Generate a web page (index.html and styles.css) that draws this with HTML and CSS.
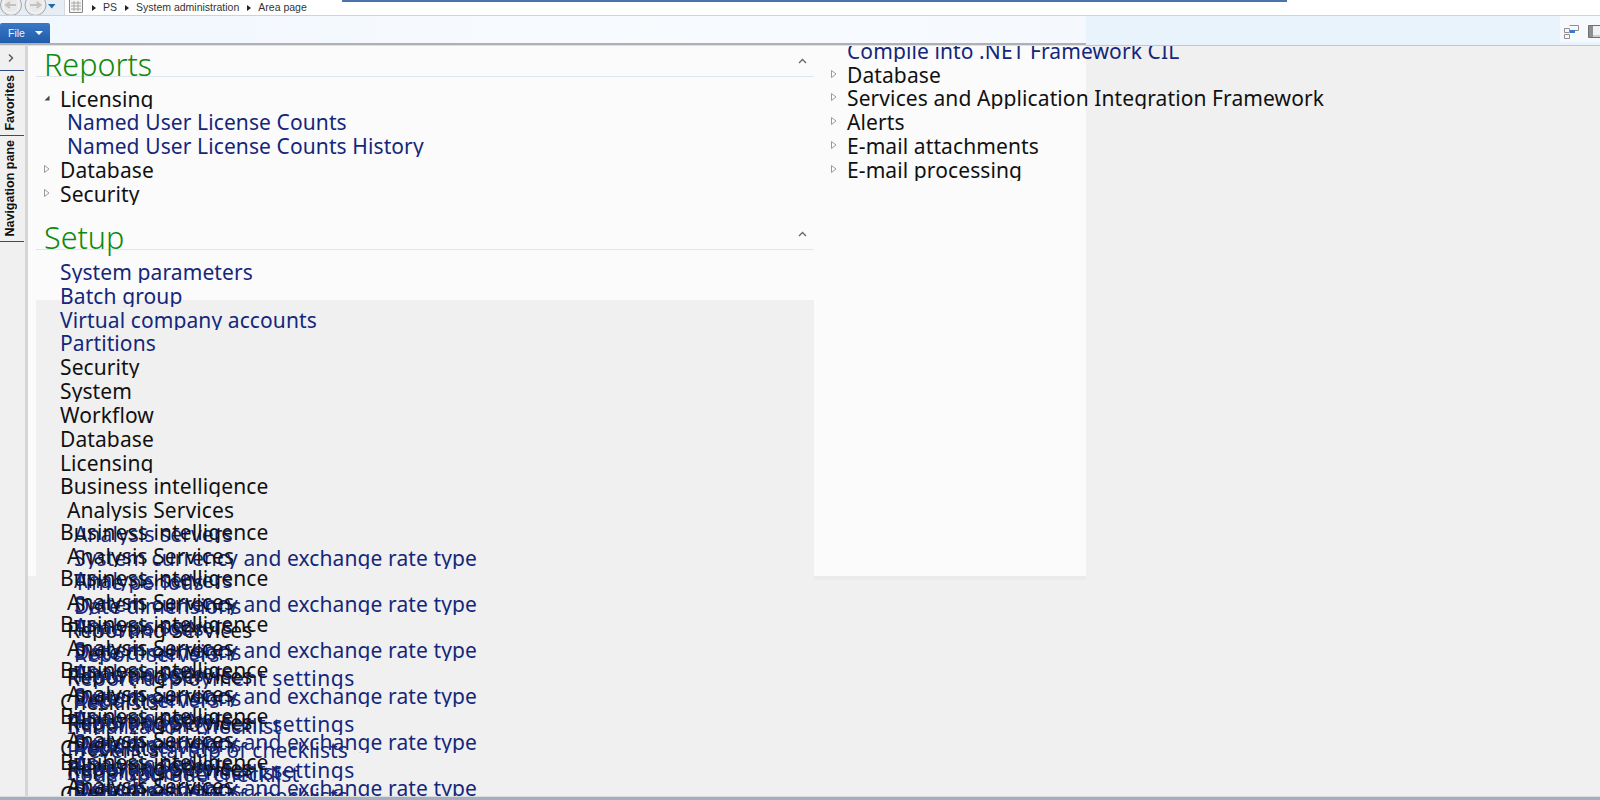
FILE: index.html
```html
<!DOCTYPE html>
<html lang="en">
<head>
<meta charset="utf-8">
<title>System administration - Area page</title>
<link rel="stylesheet" href="styles.css">
</head>
<body>
<div class="app">
  <header class="topbar">
    <div class="strip"></div>
    <div class="navbtns">
      <svg class="navsvg" width="64" height="16" viewBox="0 0 64 16">
        <circle cx="11" cy="5" r="10.500" fill="#e9e9e9" stroke="#a2a9b1"/>
        <circle cx="11" cy="5" r="8" fill="none" stroke="#f8f8f8"/>
        <path d="M16 5H7M10 2 6 5l4 3" fill="none" stroke="#c2c2c2" stroke-width="2"/>
        <circle cx="35.500" cy="5" r="10.500" fill="#e9e9e9" stroke="#a2a9b1"/>
        <circle cx="35.500" cy="5" r="8" fill="none" stroke="#f8f8f8"/>
        <path d="M30 5h9M36.500 2l4 3-4 3" fill="none" stroke="#c2c2c2" stroke-width="2"/>
        <path d="M48 4h7.500l-3.750 4.500z" fill="#1f6aa5"/>
      </svg>
    </div>
    <div class="address">
      <svg class="addricon" width="16" height="14" viewBox="0 0 16 14">
        <path d="M1.500 0v12.500h13V0" fill="#f4f4f4" stroke="#8a8a8a"/>
        <path d="M3 3h10M3 6h10M3 9h10M6 1v10M10 1v10" stroke="#a8a8a8" fill="none"/>
      </svg>
      <span class="crumbarrow"></span><span class="crumb">PS</span>
      <span class="crumbarrow"></span><span class="crumb">System administration</span>
      <span class="crumbarrow"></span><span class="crumb">Area page</span>
    </div>
  </header>

  <div class="ribbon">
    <div class="ribbon-left">
      <div class="filetab"><span>File</span><i class="filearrow"></i></div>
    </div>
    <div class="ribbon-right">
      <div class="winicons">
        <svg width="16" height="14" viewBox="0 0 16 14">
          <path d="M5.500 .5h9v5h-4M.5 3.500h5v4h-5zM.5 9.500h5v4h-5z" fill="none" stroke="#8f8f8f"/>
          <path d="M6 5h5v3H6z" fill="#3a78d0"/>
        </svg>
        <svg width="16" height="14" viewBox="0 0 16 14">
          <path d="M.5 .5H16v12H.5z" fill="#f2f2f2" stroke="#6f6f6f"/>
          <path d="M1 1h4v11H1z" fill="#8f8f8f"/>
          <path d="M5 10h11v2H5z" fill="#cfcfcf"/>
        </svg>
      </div>
    </div>
  </div>

  <div class="body">
    <nav class="rail">
      <div class="rail-toggle">
        <svg width="6" height="8" viewBox="0 0 6 8"><path d="M1 .5 4.500 4 1 7.500" fill="none" stroke="#555" stroke-width="1.400"/></svg>
      </div>
      <div class="railtab favorites"><span>Favorites</span></div>
      <div class="railtab navpane"><span>Navigation pane</span></div>
    </nav>

    <main class="sheet">
      <div class="col-left">
        <section class="reports">
          <div class="heading"><h2>Reports</h2><svg class="collapse" width="9" height="6" viewBox="0 0 9 6"><path d="M1 5l3.500-3.500L8 5" fill="none" stroke="#666" stroke-width="1.300"/></svg></div>
          <div class="rows">
            <div class="row folder"><svg class="tw open" width="6" height="6" viewBox="0 0 6 6"><path d="M5.500 .5v5H.5z" fill="#444"/></svg><span>Licensing</span></div>
            <div class="row l1 link"><span>Named User License Counts</span></div>
            <div class="row l1 link"><span>Named User License Counts History</span></div>
            <div class="row folder"><svg class="tw" width="6" height="8" viewBox="0 0 6 8"><path d="M.5 .5 5 4 .5 7.500z" fill="#fff" stroke="#999"/></svg><span>Database</span></div>
            <div class="row folder"><svg class="tw" width="6" height="8" viewBox="0 0 6 8"><path d="M.5 .5 5 4 .5 7.500z" fill="#fff" stroke="#999"/></svg><span>Security</span></div>
          </div>
        </section>
        <section class="setup">
          <div class="heading"><h2>Setup</h2><svg class="collapse" width="9" height="6" viewBox="0 0 9 6"><path d="M1 5l3.500-3.500L8 5" fill="none" stroke="#666" stroke-width="1.300"/></svg></div>
          <div class="rows">
            <div class="row l0 link"><span>System parameters</span></div>
            <div class="row l0 link"><span>Batch group</span></div>
            <div class="row l0 link"><span>Virtual company accounts</span></div>
            <div class="row l0 link"><span>Partitions</span></div>
            <div class="row l0"><span>Security</span></div>
            <div class="row l0"><span>System</span></div>
            <div class="row l0"><span>Workflow</span></div>
            <div class="row l0"><span>Database</span></div>
            <div class="row l0"><span>Licensing</span></div>
            <div class="group">
              <div class="row l0"><span>Business intelligence</span></div>
              <div class="row l1"><span>Analysis Services</span></div>
              <div class="row l2 link"><span>Analysis servers</span></div>
              <div class="row l2 link"><span>System currency and exchange rate type</span></div>
              <div class="row l2 link"><span>Time periods</span></div>
              <div class="row l2 link"><span>Date dimensions</span></div>
              <div class="row l1"><span>Reporting Services</span></div>
              <div class="row l2 link"><span>Report servers</span></div>
              <div class="row l1 link wide"><span>Report deployment settings</span></div>
              <div class="row l0"><span>Checklists</span></div>
              <div class="row l1 link"><span>Initialization checklist</span></div>
              <div class="row l1 link"><span>Prevent startup of checklists</span></div>
              <div class="row l1 link"><span>Code upgrade checklist</span></div>
            </div>
            <div class="group">
              <div class="row l0"><span>Business intelligence</span></div>
              <div class="row l1"><span>Analysis Services</span></div>
              <div class="row l2 link"><span>Analysis servers</span></div>
              <div class="row l2 link"><span>System currency and exchange rate type</span></div>
              <div class="row l2 link"><span>Time periods</span></div>
              <div class="row l2 link"><span>Date dimensions</span></div>
              <div class="row l1"><span>Reporting Services</span></div>
              <div class="row l2 link"><span>Report servers</span></div>
              <div class="row l1 link wide"><span>Report deployment settings</span></div>
              <div class="row l0"><span>Checklists</span></div>
              <div class="row l1 link"><span>Initialization checklist</span></div>
              <div class="row l1 link"><span>Prevent startup of checklists</span></div>
            </div>
            <div class="group">
              <div class="row l0"><span>Business intelligence</span></div>
              <div class="row l1"><span>Analysis Services</span></div>
              <div class="row l2 link"><span>Analysis servers</span></div>
              <div class="row l2 link"><span>System currency and exchange rate type</span></div>
              <div class="row l2 link"><span>Time periods</span></div>
              <div class="row l2 link"><span>Date dimensions</span></div>
              <div class="row l1"><span>Reporting Services</span></div>
              <div class="row l2 link"><span>Report servers</span></div>
              <div class="row l1 link wide"><span>Report deployment settings</span></div>
              <div class="row l0"><span>Checklists</span></div>
            </div>
            <div class="group">
              <div class="row l0"><span>Business intelligence</span></div>
              <div class="row l1"><span>Analysis Services</span></div>
              <div class="row l2 link"><span>Analysis servers</span></div>
              <div class="row l2 link"><span>System currency and exchange rate type</span></div>
              <div class="row l2 link"><span>Time periods</span></div>
              <div class="row l2 link"><span>Date dimensions</span></div>
              <div class="row l1"><span>Reporting Services</span></div>
              <div class="row l2 link"><span>Report servers</span></div>
            </div>
            <div class="group">
              <div class="row l0"><span>Business intelligence</span></div>
              <div class="row l1"><span>Analysis Services</span></div>
              <div class="row l2 link"><span>Analysis servers</span></div>
              <div class="row l2 link"><span>System currency and exchange rate type</span></div>
              <div class="row l2 link"><span>Time periods</span></div>
              <div class="row l2 link"><span>Date dimensions</span></div>
            </div>
            <div class="group">
              <div class="row l0"><span>Business intelligence</span></div>
              <div class="row l1"><span>Analysis Services</span></div>
              <div class="row l2 link"><span>Analysis servers</span></div>
              <div class="row l2 link"><span>System currency and exchange rate type</span></div>
            </div>
            <div class="group">
              <div class="row l0"><span>Business intelligence</span></div>
              <div class="row l1"><span>Analysis Services</span></div>
            </div>
          </div>
        </section>
      </div>
      <div class="col-right">
        <div class="scrolled">
          <div class="row plain link"><span>Compile into .NET Framework CIL</span></div>
          <div class="row side"><svg class="tw" width="6" height="8" viewBox="0 0 6 8"><path d="M.5 .5 5 4 .5 7.500z" fill="#fff" stroke="#999"/></svg><span>Database</span></div>
          <div class="row side"><svg class="tw" width="6" height="8" viewBox="0 0 6 8"><path d="M.5 .5 5 4 .5 7.500z" fill="#fff" stroke="#999"/></svg><span>Services and Application Integration Framework</span></div>
          <div class="row side"><svg class="tw" width="6" height="8" viewBox="0 0 6 8"><path d="M.5 .5 5 4 .5 7.500z" fill="#fff" stroke="#999"/></svg><span>Alerts</span></div>
          <div class="row side"><svg class="tw" width="6" height="8" viewBox="0 0 6 8"><path d="M.5 .5 5 4 .5 7.500z" fill="#fff" stroke="#999"/></svg><span>E-mail attachments</span></div>
          <div class="row side"><svg class="tw" width="6" height="8" viewBox="0 0 6 8"><path d="M.5 .5 5 4 .5 7.500z" fill="#fff" stroke="#999"/></svg><span>E-mail processing</span></div>
        </div>
      </div>
    </main>
  </div>
  <footer class="statusbar"></footer>
</div>
</body>
</html>
```

FILE: styles.css
```css
* { box-sizing: border-box; }
html, body { margin: 0; padding: 0; height: 100%; overflow: hidden; }
body { font-family: "Noto Sans", sans-serif; background: #f0f0f0; color: #111; }
.app { position: relative; width: 1600px; height: 800px; display: flex; flex-direction: column; overflow: hidden; }

/* top address bar */
.topbar { height: 16px; flex: none; display: flex; background: #fcfcfe; border-bottom: 1px solid #d2d2d4; overflow: hidden; }
.strip { position: absolute; left: 342px; top: 0; width: 945px; height: 2px; background: #4a73ad; }
.navbtns { width: 64px; flex: none; background: #e6edf4; }
.navsvg { display: block; }
.address { flex: 1; display: flex; align-items: center; font: 10.5px/15px "Liberation Sans", sans-serif; color: #333; background: #fff; border-left: 1px solid #d4d8dc; height: 15px; padding-left: 3px; }
.addricon { margin-right: 8px; align-self: flex-start; }
.crumbarrow { width: 0; height: 0; border-left: 4px solid #222; border-top: 3.5px solid transparent; border-bottom: 3.5px solid transparent; margin-right: 7px; }
.crumb { margin-right: 8px; }

/* ribbon */
.ribbon { height: 30px; flex: none; display: flex; }
.ribbon-left { width: 1086px; background: linear-gradient(90deg, #f1f7fe, #f8fbfe 60%, #f5f9fe); border-bottom: 1px solid #e0e0e0; box-shadow: inset 0 -2px 0 #aeb0b2; padding-top: 7px; }
.ribbon-right { flex: 1; background: #e9f3fc; border-bottom: 1px solid #c4c6c8; display: flex; justify-content: flex-end; }
.filetab { width: 50px; height: 20px; background: linear-gradient(#3a78c6, #1f5cab); border-radius: 2px 2px 0 0; color: #eaf2fb; font: 10.5px/20px "Liberation Sans", sans-serif; padding-left: 8px; display: flex; align-items: center; }
.filearrow { width: 0; height: 0; border-top: 4px solid #fff; border-left: 4px solid transparent; border-right: 4px solid transparent; margin-left: 10px; }
.winicons { width: 40px; height: 26px; background: #f6fafe; display: flex; gap: 8px; padding: 9px 0 0 4px; overflow: hidden; }
.winicons svg { flex: none; }

/* body */
.body { flex: 1; display: flex; min-height: 0; }
.rail { width: 28px; flex: none; border-right: 3px solid #d6d6d6; background: #f0f0f0; }
.rail-toggle { height: 24px; display: flex; align-items: center; justify-content: center; padding-right: 3px; }
.railtab { width: 24px; border-top: 1px solid #2f4a85; font: bold 12.5px/16px "Liberation Sans", sans-serif; color: #111; display: flex; align-items: center; justify-content: flex-start; padding-left: 2px; }
.railtab span { writing-mode: vertical-rl; transform: rotate(180deg); }
.favorites { height: 65px; }
.navpane { height: 107px; border-bottom: 1px solid #2f4a85; }

.sheet { width: 1058px; height: 530px; flex: none; display: flex; padding-left: 8px; background: #fbfbfb; }
.col-left { width: 778px; height: 530px; flex: none; background: linear-gradient(#fbfbfb 254px, #f0f0f0 254px); }
.col-right { width: 272px; height: 530px; flex: none; clip-path: inset(0 -700px -10px 0); box-shadow: 0 4px 0 #ebebeb; }
.scrolled { margin-top: -8.3px; width: max-content; }

.heading { height: 31px; position: relative; border-bottom: 1px solid #dfe6ee; padding-left: 8px; }
.heading h2 { margin: 0; font-size: 30.5px; line-height: 37px; font-weight: 300; color: #0c8a0c; height: 30px; }
.collapse { position: absolute; right: 7px; top: 12px; }
.rows { padding-top: 8.5px; }
.setup { margin-top: 14.6px; }

.row { height: 23.85px; line-height: 27px; font-size: 21px; letter-spacing: .1px; overflow: hidden; display: flex; white-space: nowrap; color: #111; }
.link { color: #14277a; }
.wide { letter-spacing: .52px; }
.l0 { padding-left: 24px; }
.l1 { padding-left: 31px; }
.l2 { padding-left: 38px; }
.folder { padding-left: 8px; }
.side { padding-left: 17px; }
.plain { padding-left: 33px; }
.tw { flex: none; margin: 8px 10px 0 0; }
.tw.open { margin-top: 9px; }
.group { height: 46px; }
.group .row { height: 24px; }
.statusbar { position: absolute; left: 0; right: 0; bottom: 0; height: 4px; background: #a3afc0; border-top: 1px solid #dcdcdc; }
```
